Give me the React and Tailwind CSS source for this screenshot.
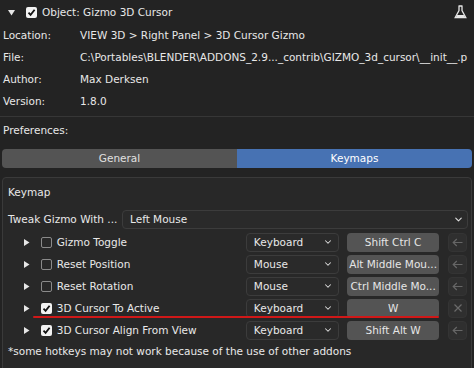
import { ChevronDown } from "lucide-react";

const rows = [
  { name: "Gizmo Toggle", on: false, type: "Keyboard", key: "Shift Ctrl C", x: false },
  { name: "Reset Position", on: false, type: "Mouse", key: "Alt Middle Mou...", x: false },
  { name: "Reset Rotation", on: false, type: "Mouse", key: "Ctrl Middle Mo...", x: false },
  { name: "3D Cursor To Active", on: true, type: "Keyboard", key: "W", x: true },
  { name: "3D Cursor Align From View", on: true, type: "Keyboard", key: "Shift Alt W", x: false },
];

function Check({ on }) {
  if (!on) return <span className="block w-[11px] h-[11px] rounded-[2px] border border-[#8a8a8a]" />;
  return (
    <span className="flex items-center justify-center w-[11px] h-[11px] rounded-[2px] bg-[#f2f2f2]">
      <svg width="9" height="9" viewBox="0 0 9 9">
        <path d="M1.5 4.6 L3.6 6.8 L7.6 1.8" fill="none" stroke="#111" strokeWidth="1.8" />
      </svg>
    </span>
  );
}

function Tri({ down }) {
  return (
    <svg width="7" height="7" viewBox="0 0 7 7" className="shrink-0">
      {down ? <path d="M0 1 H7 L3.5 6.5 Z" fill="#e6e6e6" /> : <path d="M1 0 V7 L6.5 3.5 Z" fill="#e6e6e6" />}
    </svg>
  );
}

export default function App() {
  return (
    <div
      className="relative w-[474px] h-[368px] overflow-hidden bg-[#232323] text-[#e8e8e8] text-[10.5px] leading-none"
      style={{ fontFamily: '"DejaVu Sans", sans-serif' }}
    >
      {/* header */}
      <div className="flex items-center h-[24px] pl-[8px] pr-[7px]">
        <Tri down />
        <span className="ml-[11px] mr-[5px]">
          <Check on />
        </span>
        <span>Object: Gizmo 3D Cursor</span>
        <svg className="ml-auto" width="13" height="14" viewBox="0 0 13 14">
          <path d="M4.5 1 H8.5 M5 1 V5.5 L1.2 12.5 H11.8 L8 5.5 V1" fill="none" stroke="#e6e6e6" strokeWidth="1.3" />
          <path d="M3.2 10 H9.8 L11 12.2 H2 Z" fill="#e6e6e6" />
        </svg>
      </div>

      {/* info */}
      <div className="flex flex-col pl-[3px]">
        {[
          ["Location:", "VIEW 3D > Right Panel > 3D Cursor Gizmo"],
          ["File:", "C:\\Portables\\BLENDER\\ADDONS_2.9..._contrib\\GIZMO_3d_cursor\\__init__.p"],
          ["Author:", "Max Derksen"],
          ["Version:", "1.8.0"],
        ].map(([k, v]) => (
          <div key={k} className="flex items-center h-[22px] whitespace-nowrap">
            <span className="w-[77px] shrink-0">{k}</span>
            <span>{v}</span>
          </div>
        ))}
      </div>

      <div className="mt-[4px] h-px bg-[#363636]" />

      <div className="flex items-center h-[27px] pl-[3px]">Preferences:</div>

      {/* tabs */}
      <div className="flex mx-[2px] h-[19px] mt-[5px]">
        <div className="flex-1 flex items-center justify-center rounded-l-[4px] bg-[#545454] text-[#e0e0e0]">General</div>
        <div className="flex-1 flex items-center justify-center rounded-r-[4px] bg-[#4772b3] text-white">Keymaps</div>
      </div>

      {/* keymap box */}
      <div className="mx-[2px] mt-[9px] h-[200px] rounded-[4px] border border-[#3a3a3a] bg-[#282828] px-[4px]">
        <div className="flex items-center h-[28px] pl-[1px]">Keymap</div>
        <div className="flex items-center h-[22px] mt-[2px]">
          <span className="w-[115px] pl-[1px] shrink-0">Tweak Gizmo With ...</span>
          <div className="flex-1 flex items-center h-[19px] rounded-[4px] border border-[#3c3c3c] bg-[#2a2a2a] pl-[7px] pr-[3px] mr-[-1px]">
            <span>Left Mouse</span>
            <ChevronDown className="ml-auto" size={11} strokeWidth={2.5} color="#dcdcdc" />
          </div>
        </div>
        <div className="flex flex-col mt-[1px]">
          {rows.map((r) => (
            <div key={r.name} className="flex items-center h-[22px]">
              <span className="ml-[16px] w-[18px]">
                <Tri />
              </span>
              <Check on={r.on} />
              <span className="ml-[5px] w-[191px] whitespace-nowrap">{r.name}</span>
              <div className="flex items-center w-[94px] h-[19px] rounded-[4px] border border-[#3c3c3c] bg-[#2a2a2a] pl-[7px] pr-[5px]">
                <span>{r.type}</span>
                <ChevronDown className="ml-auto" size={10} strokeWidth={2.5} color="#dcdcdc" />
              </div>
              <div className="flex items-center justify-center ml-[8px] w-[93px] h-[19px] rounded-[4px] bg-[#545454] text-[#e6e6e6] whitespace-nowrap">
                {r.key}
              </div>
              <div className="flex items-center justify-center ml-[9px] w-[19px] h-[19px] rounded-[4px] bg-[#2f2f2f] border border-[#343434]">
                {r.x ? (
                  <svg width="10" height="10" viewBox="0 0 10 10">
                    <path d="M1.5 1.5 L8.5 8.5 M8.5 1.5 L1.5 8.5" stroke="#6a6a6a" strokeWidth="1.2" />
                  </svg>
                ) : (
                  <svg width="11" height="9" viewBox="0 0 11 9">
                    <path d="M10.5 4.5 H1.2 M4.8 1 L1.2 4.5 L4.8 8" fill="none" stroke="#666" strokeWidth="1.2" />
                  </svg>
                )}
              </div>
            </div>
          ))}
        </div>
        <div className="flex items-center h-[20px] pl-[1px]">
          *some hotkeys may not work because of the use of other addons
        </div>
      </div>

      {/* red annotation line */}
      <div className="absolute left-[33px] top-[316px] w-[406px] h-[2px] bg-[#d01818] rounded-full" />
    </div>
  );
}
